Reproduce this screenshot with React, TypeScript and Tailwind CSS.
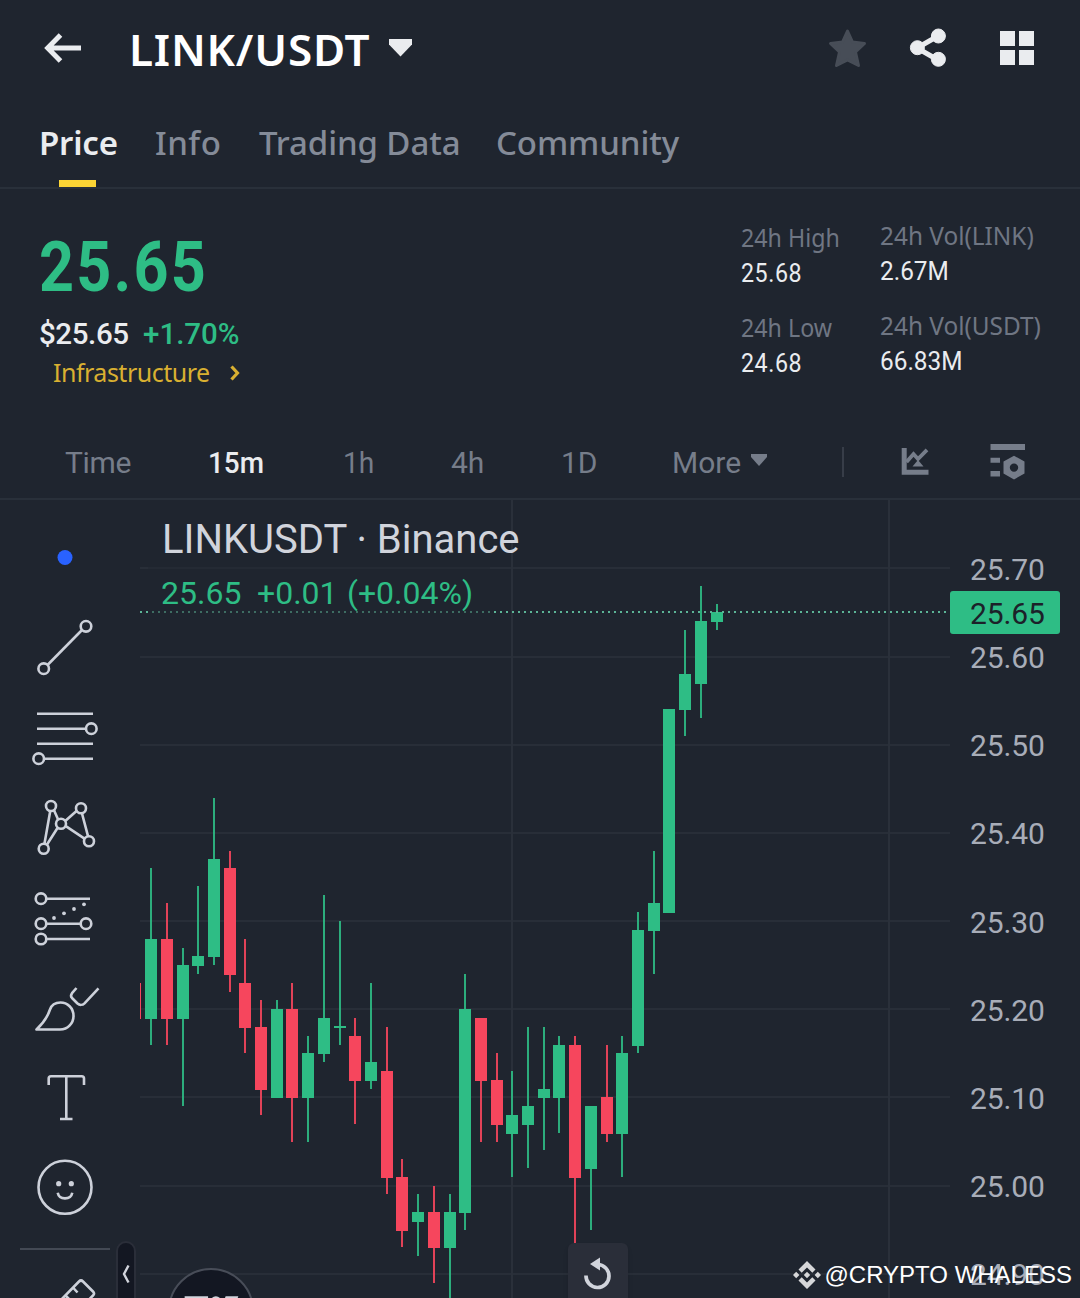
import type { ReactNode } from 'react'

type Candle = [x: number, up: boolean, high: number, top: number, bottom: number, low: number]

// Prices are in cents above 25.00
const candles: Candle[] = [
  [135, false, 23, 23, 19, 19],
  [151, true, 36, 28, 19, 16],
  [167, false, 32, 28, 19, 16],
  [183, true, 27, 25, 19, 9],
  [198, true, 34, 26, 25, 24],
  [214, true, 44, 37, 26, 25],
  [230, false, 38, 36, 24, 22],
  [245, false, 28, 23, 18, 15],
  [261, false, 21, 18, 11, 8],
  [277, true, 21, 20, 10, 10],
  [292, false, 23, 20, 10, 5],
  [308, true, 17, 15, 10, 5],
  [324, true, 33, 19, 15, 14],
  [340, true, 30, 18, 18, 16],
  [355, false, 19, 17, 12, 7],
  [371, true, 23, 14, 12, 11],
  [387, false, 18, 13, 1, -1],
  [402, false, 3, 1, -5, -7],
  [418, true, -1, -3, -4, -8],
  [434, false, 0, -3, -7, -11],
  [450, true, -1, -3, -7, -14],
  [465, true, 24, 20, -3, -5],
  [481, false, 19, 19, 12, 5],
  [497, false, 15, 12, 7, 5],
  [512, true, 13, 8, 6, 1],
  [528, true, 18, 9, 7, 2],
  [544, true, 18, 11, 10, 4],
  [559, true, 17, 16, 10, 6],
  [575, false, 17, 16, 1, -8],
  [591, true, 9, 9, 2, -5],
  [607, false, 16, 10, 6, 5],
  [622, true, 17, 15, 6, 1],
  [638, true, 31, 29, 16, 15],
  [654, true, 38, 32, 29, 24],
  [669, true, 54, 54, 31, 31],
  [685, true, 63, 58, 54, 51],
  [701, true, 68, 64, 57, 53],
  [717, true, 66, 65, 64, 63],
]

const axisLabels = ['25.70', '25.60', '25.50', '25.40', '25.30', '25.20', '25.10', '25.00', '24.90']

const CHART_LEFT = 140
const CHART_TOP = 500
const priceY = (cents: number) => Math.round(1185.6 - CHART_TOP - cents * 8.817)

function CandleChart() {
  return (
    <svg className="block h-[798px] w-[810px]" viewBox="0 0 810 798" shapeRendering="crispEdges">
      {axisLabels.map((label, i) => (
        <rect key={label} x="0" y={priceY(70 - i * 10) - 1} width="810" height="2" fill="#282e38" />
      ))}
      <rect x="371" y="0" width="2" height="798" fill="#2a303a" />
      <rect x="748" y="0" width="2" height="798" fill="#2a303a" />
      {candles.map(([x, up, high, top, bottom, low]) => {
        const cx = x - CHART_LEFT
        const y1 = top === bottom ? priceY(top) - 1 : priceY(top)
        const y2 = priceY(bottom) + 1
        return (
          <g key={x} fill={up ? '#2ebd85' : '#f6465d'}>
            <rect x={cx - 1} y={priceY(high)} width="2" height={priceY(low) - priceY(high)} opacity="0.9" />
            <rect x={cx - 6} y={y1} width="12" height={y2 - y1} />
          </g>
        )
      })}
      <line x1="0" y1="112" x2="810" y2="112" stroke="#5cb597" strokeWidth="2" strokeDasharray="2 4" />
    </svg>
  )
}

function ToolIcon({ children }: { children: ReactNode }) {
  return (
    <svg
      className="block h-[90px] w-[90px] shrink-0"
      viewBox="0 0 90 90"
      fill="none"
      stroke="#cdd1da"
      strokeWidth="2.6"
      strokeLinejoin="round"
    >
      {children}
    </svg>
  )
}

function Toolbar() {
  return (
    <div className="flex w-[140px] shrink-0 flex-col px-5 pt-3">
      <ToolIcon>
        <circle cx="45" cy="45.5" r="7.5" fill="#2962ff" stroke="none" />
      </ToolIcon>
      {/* Trend line */}
      <ToolIcon>
        <path d="M27.5 63 62 28" />
        <circle cx="66" cy="24.3" r="5.3" />
        <circle cx="23.7" cy="66.7" r="5.3" />
      </ToolIcon>
      {/* Fib retracement */}
      <ToolIcon>
        <path d="M17 21.7h56M17 36.7h49M17 51.7h56M24 66.7h49" />
        <circle cx="71.3" cy="36.7" r="5.3" />
        <circle cx="18.7" cy="66.7" r="5.3" />
      </ToolIcon>
      {/* Pattern */}
      <ToolIcon>
        <path d="M30.2 29.2 24.5 61.5M34 28.3l4 9M27 62.5l10.5-16.5M45.5 38.8 56.5 29M45.8 44.2 64.5 56.6M62 31.5l6 22.6" />
        <circle cx="31" cy="24" r="5" />
        <circle cx="61" cy="26.3" r="5" />
        <circle cx="41" cy="41.7" r="5" />
        <circle cx="23.7" cy="66.7" r="5" />
        <circle cx="69" cy="59.3" r="5" />
      </ToolIcon>
      {/* Projection */}
      <ToolIcon>
        <path d="M26.5 26.7H70M26.5 51.7h34M26.5 67H70" />
        <circle cx="21" cy="26.7" r="5.3" />
        <circle cx="21" cy="51.7" r="5.3" />
        <circle cx="66" cy="51.7" r="5.3" />
        <circle cx="21" cy="67" r="5.3" />
        <g fill="#cdd1da" stroke="none">
          <circle cx="34" cy="46" r="1.9" />
          <circle cx="44" cy="41.3" r="1.9" />
          <circle cx="54" cy="37" r="1.9" />
          <circle cx="64" cy="32.3" r="1.9" />
        </g>
      </ToolIcon>
      {/* Brush */}
      <ToolIcon>
        <path d="M16.5 67.5H40C48 67.5 53.5 61 53.5 54 53.5 46 47.5 40.5 40.5 40.5 35.5 40.5 31.5 43 30 47.5 27.5 55 23 61.5 16.5 67.5Z" />
        <path d="M56.5 26 52 31.2C50.8 32.8 50.8 34.6 52 36L57.5 41.5C59.5 43.3 62.5 43.3 64.5 41.3L78.5 26.3" />
      </ToolIcon>
      {/* Text */}
      <ToolIcon>
        <path d="M28.7 33v-6.5q0-2.3 2.3-2.3h30.7q2.3 0 2.3 2.3V33M46.3 24.2V67M40 67h12.5" />
      </ToolIcon>
      {/* Emoji */}
      <ToolIcon>
        <circle cx="45" cy="45.3" r="26.5" />
        <path d="M37.7 50.7c1.5 7.5 13.1 7.5 14.6 0" />
        <g fill="#cdd1da" stroke="none">
          <circle cx="38.7" cy="41.7" r="2.6" />
          <circle cx="51.3" cy="41.7" r="2.6" />
        </g>
      </ToolIcon>
      <div className="mt-4 h-[2px] w-[90px] shrink-0 bg-[#434954]" />
      {/* Ruler */}
      <ToolIcon>
        <path d="m36 55 23-23.500q2-2 4 0l10 10q2 2 0 4L50 69M52.500 37l5 5.500M45 45l5 5" />
      </ToolIcon>
    </div>
  )
}

function Header() {
  return (
    <header className="flex h-24 shrink-0 items-center">
      <svg className="ml-11 h-[34px] w-[38px]" viewBox="0 0 38 34" fill="none" stroke="#eaecef" strokeWidth="5">
        <path d="M16.5 4 3.7 17l12.8 13M4 17h33" />
      </svg>
      <h1 className="ml-[47px] w-[241px] pt-px font-['Noto_Sans'] text-[44px] leading-none font-semibold tracking-[0.8px] whitespace-nowrap text-white">
        LINK/USDT
      </h1>
      <svg className="ml-[19px] h-[18px] w-[23px]" viewBox="0 0 23 18" fill="#eaecef">
        <path d="M0 0h23v5.5L11.5 17.5 0 5.5Z" />
      </svg>
      <svg className="ml-auto h-10 w-10" viewBox="0 0 40 40" fill="#474d57" stroke="#474d57" strokeWidth="3" strokeLinejoin="round">
        <path d="m20.5 3 5 11 12 1.5-9 8.5 3 13.5-11-5.5-11 5.5 3-13.5-9-8.5 12-1.5Z" />
      </svg>
      <svg className="ml-[42px] h-10 w-10" viewBox="0 0 40 40" fill="#eaecef" stroke="#eaecef">
        <path d="M29 8 8 20l21 12" fill="none" strokeWidth="5" />
        <circle cx="29.4" cy="8" r="7" />
        <circle cx="8.4" cy="19.7" r="7" />
        <circle cx="29.4" cy="31.3" r="7" />
      </svg>
      <div className="mr-[46px] mb-px ml-[51px] grid grid-cols-2 gap-1">
        <div className="size-[15px] bg-[#eaecef]" />
        <div className="size-[15px] bg-[#eaecef]" />
        <div className="size-[15px] bg-[#eaecef]" />
        <div className="size-[15px] bg-[#eaecef]" />
      </div>
    </header>
  )
}

function Tabs() {
  return (
    <nav className="flex h-[93px] shrink-0 border-b-2 border-[#29303a] pl-[39px] font-['Noto_Sans'] text-[33px] leading-[94px] font-medium whitespace-nowrap text-[#848b98]">
      <div className="flex w-[116px] flex-col">
        <span className="h-[84px] font-semibold tracking-[-0.2px] text-[#eaecef]">Price</span>
        <span className="ml-5 h-[7px] w-[37px] bg-[#fcd535]" />
      </div>
      <span className="w-[104px] tracking-[0.5px]">Info</span>
      <span className="w-[237px] tracking-[-0.1px]">Trading Data</span>
      <span className="tracking-[-0.1px]">Community</span>
    </nav>
  )
}

function Stat({ label, value }: { label: string; value: string }) {
  return (
    <div className="h-[90px] text-[25px] whitespace-nowrap">
      <div className="h-9 font-['Noto_Sans'] leading-[35px] text-[#6f7683]">{label}</div>
      <div className="h-[35px] font-['Roboto'] leading-[35px] text-[#eaecef]">{value}</div>
    </div>
  )
}

function Ticker() {
  return (
    <section className="flex h-[237px] shrink-0">
      <div className="w-[741px] pt-[38px] pl-[39px] whitespace-nowrap">
        <div className="h-[78px] w-[200px] origin-left scale-x-[0.86] font-['Roboto'] text-[71px] leading-[79px] font-bold tracking-[2.6px] text-[#2ebd85]">
          25.65
        </div>
        <div className="flex h-[56px] pt-[3px] font-['Roboto'] text-[29.5px] leading-[52px] font-medium">
          <span className="w-[104px] tracking-[-0.4px] text-[#eaecef]">$25.65</span>
          <span className="text-[#2ebd85]">+1.70%</span>
        </div>
        <div className="flex h-6 items-center pl-[14px] font-['Noto_Sans'] text-[25px] text-[#d9b031]">
          <span className="w-[176px] tracking-[-0.5px]">Infrastructure</span>
          <svg className="h-4 w-3" viewBox="0 0 12 16" fill="none" stroke="#d9b031" strokeWidth="3.2">
            <path d="m2.5 1.5 6 6.5-6 6.5" />
          </svg>
        </div>
      </div>
      <div className="w-[139px] origin-left scale-x-[0.93] pt-[31px] [&>div>div:last-child]:tracking-[0.6px]">
        <Stat label="24h High" value="25.68" />
        <Stat label="24h Low" value="24.68" />
      </div>
      <div className="origin-left scale-x-[0.975] pt-[29px]">
        <Stat label="24h Vol(LINK)" value="2.67M" />
        <Stat label="24h Vol(USDT)" value="66.83M" />
      </div>
    </section>
  )
}

function Intervals() {
  return (
    <div className="flex h-[74px] shrink-0 items-center border-b-2 border-[#29303a] pl-[65px] font-['Roboto'] text-[30px] whitespace-nowrap text-[#767d8a]">
      <span className="w-[143px] tracking-[-0.3px]">Time</span>
      <span className="w-[135px] origin-left scale-x-[0.93] font-medium text-[#eaecef]">15m</span>
      <span className="w-[108px] origin-left scale-x-[0.94]">1h</span>
      <span className="w-[110px]">4h</span>
      <span className="w-[111px]">1D</span>
      <span className="w-[79px]">More</span>
      <svg className="mb-1 h-3 w-4" viewBox="0 0 16 12" fill="#767d8a">
        <path d="M0 0h16v3L8 12 0 3Z" />
      </svg>
      <div className="ml-[75px] h-[30px] w-[2px] bg-[#373d48]" />
      <svg className="ml-[57px] h-7 w-7" viewBox="0 0 28 28" fill="none" stroke="#767d8a">
        <path d="M3.2 0v24.200H27.500" strokeWidth="5" />
        <path d="m5.5 14 7-8 4.5 5L26 1.8" strokeWidth="3.8" />
        <path d="m11.5 18.5 5.5-6.5 5.5 6.5Z" fill="#767d8a" stroke="none" />
      </svg>
      <svg className="ml-[61px] h-9 w-9" viewBox="0 0 36 36" fill="#767d8a">
        <path d="M.5 0H35v6H.5ZM.5 13.7h9.500v5H.5ZM.5 27h9.500v5.500H.5Z" />
        <path fillRule="evenodd" d="M24 11.7 34.5 17.5v12L24 35.5l-10.5-6v-12Zm0 7.7a4.2 4.2 0 1 0 0 8.4 4.2 4.2 0 0 0 0-8.4Z" />
      </svg>
    </div>
  )
}

function PriceAxis() {
  return (
    <div className="relative flex-1 pt-[26px] font-['Roboto'] text-[30px] tracking-[-0.1px] text-[#a8adb8]">
      {axisLabels.map((label) => (
        <div key={label} className="h-[88.17px] pl-5 leading-[88px]">
          {label}
        </div>
      ))}
      <div className="absolute top-[91px] left-0 h-[43px] w-[110px] rounded-[3px] bg-[#2ebd85] pl-5 leading-[45px] text-[#1c2129]">
        25.65
      </div>
    </div>
  )
}

function Watermark() {
  return (
    <div className="absolute right-2 bottom-[9px] flex items-center gap-[3px]">
      <svg className="h-7 w-7" viewBox="0 0 28 28" fill="#d6d7d9">
        <path d="m14 0 8.5 8.5-3.2 3.2L14 6.4l-5.3 5.3-3.2-3.2ZM14 28l8.5-8.5-3.2-3.2-5.3 5.3-5.3-5.3-3.2 3.2ZM14 10.8l3.2 3.2-3.2 3.2-3.2-3.2ZM3.2 10.8 6.4 14l-3.2 3.2L0 14ZM24.8 10.8 28 14l-3.2 3.2-3.2-3.2Z" />
      </svg>
      <span className="font-['Liberation_Sans'] text-2xl leading-7 whitespace-nowrap text-white">@CRYPTO WHALESS</span>
    </div>
  )
}

export default function App() {
  return (
    <div className="relative flex h-[1298px] w-[1080px] flex-col overflow-hidden bg-[#1f252f] font-['Roboto',sans-serif]">
      <Header />
      <Tabs />
      <Ticker />
      <Intervals />
      <main className="relative flex h-[798px] overflow-hidden">
        <Toolbar />
        <div className="relative w-[810px] shrink-0 overflow-hidden">
          <CandleChart />

          {/* Symbol legend */}
          <div className="absolute top-[13px] left-2 w-[342px] bg-[#1f252f]/50 pl-[14px] whitespace-nowrap">
            <div className="h-[53px] text-[40px] leading-[53px] text-[#d1d4dc]">LINKUSDT · Binance</div>
            <div className="-ml-[1px] flex h-[54px] text-[32px] leading-[54px] text-[#2ebd85]">
              <span className="w-[96px]">25.65</span>
              <span className="w-[90px]">+0.01</span>
              <span>(+0.04%)</span>
            </div>
          </div>

          {/* Chart logo badge */}
          <div className="absolute top-[768px] left-[28px] size-[86px] rounded-full border-2 border-[#484d58] bg-[#131722]">
            <svg className="size-full" viewBox="0 0 84 84" fill="#d1d4dc">
              <path d="M15 27h24v30H27V39H15ZM57 27h13L58 57H45Z" />
              <circle cx="47" cy="33" r="6" />
            </svg>
          </div>

          {/* Reset zoom */}
          <div className="absolute top-[743px] left-[428px] h-[66px] w-[60px] rounded-md bg-[#2a2e39] shadow-md">
            <svg className="h-[60px] w-[60px]" viewBox="0 0 60 60" fill="none" stroke="#d1d4dc" strokeWidth="3.7">
              <path d="M18 32.5A11.5 11.5 0 1 0 29.5 21.5" />
              <path d="m22 21 10-6.5v13Z" fill="#d1d4dc" stroke="none" />
            </svg>
          </div>
        </div>
        <PriceAxis />

        {/* Toolbar collapse handle */}
        <div className="absolute top-[741px] left-[116px] flex h-[66px] w-5 items-center justify-center rounded-[10px] border-2 border-[#2a2e39] bg-[#131722]">
          <svg className="h-5 w-2" viewBox="0 0 8 20" fill="none" stroke="#d1d4dc" strokeWidth="2.4">
            <path d="M6.5 1.5 2 10l4.5 8.5" />
          </svg>
        </div>
      </main>
      <Watermark />
    </div>
  )
}
